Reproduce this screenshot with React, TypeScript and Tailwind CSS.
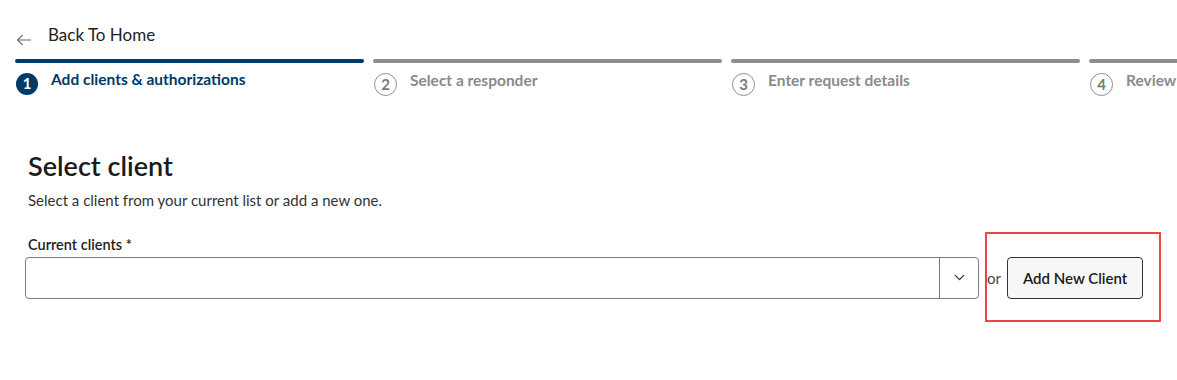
import { ChevronDown } from 'lucide-react';

type Step = { n: number; label: string; active?: boolean };

const steps: Step[] = [
  { n: 1, label: 'Add clients & authorizations', active: true },
  { n: 2, label: 'Select a responder' },
  { n: 3, label: 'Enter request details' },
  { n: 4, label: 'Review' },
];

function BackArrow() {
  return (
    <svg width="16" height="12" viewBox="0 0 16 12" fill="none" className="text-[#6b6b6b]">
      <path d="M15 6H1.5M6.5 1L1.5 6l5 5" stroke="currentColor" strokeWidth="1.1" />
    </svg>
  );
}

function StepItem({ step }: { step: Step }) {
  return (
    <div className="w-[349px] shrink-0">
      <div className={`h-[4px] rounded-full ${step.active ? 'bg-[#003a66]' : 'bg-[#8e8e8e]'}`} />
      <div className="flex items-center gap-[13px] mt-[10px] pl-[1px]">
        {step.active ? (
          <span className="w-[22px] h-[22px] rounded-full bg-[#003a66] text-white text-[15px] font-bold flex items-center justify-center leading-none">
            {step.n}
          </span>
        ) : (
          <span className="w-[23px] h-[23px] rounded-full border border-[#8e8e8e] text-[#7a7a7a] text-[15px] font-bold flex items-center justify-center leading-none">
            {step.n}
          </span>
        )}
        <span
          className={`text-[15.5px] font-bold -mt-[7px] whitespace-nowrap ${step.active ? 'text-[#003a66]' : 'text-[#8a8a8a]'}`}
        >
          {step.label}
        </span>
      </div>
    </div>
  );
}

export default function App() {
  return (
    <div className="w-[1177px] h-[380px] overflow-hidden bg-white relative font-['Lato','Liberation_Sans',sans-serif] text-[#1f1f1f]">
      <div className="flex items-center gap-[16px] pl-[16px] pt-[22px]">
        <span className="mt-[10px]">
          <BackArrow />
        </span>
        <span className="text-[17px] text-[#222]">Back To Home</span>
      </div>

      <div className="flex gap-[9px] pl-[15px] mt-[11px]">
        {steps.map((s) => (
          <StepItem key={s.n} step={s} />
        ))}
      </div>

      <div className="pl-[28px] pt-[54px]">
        <h1 className="text-[27px] font-semibold leading-[32px] text-[#1a1a1a]">Select client</h1>
        <p className="text-[15px] text-[#333] mt-[7px]">Select a client from your current list or add a new one.</p>
      </div>

      <div className="pl-[25px] pt-[23px]">
        <label className="block text-[14.5px] font-semibold text-[#222] pl-[3px]">Current clients *</label>
        <div className="flex items-center mt-[1px]">
          <div className="w-[954px] h-[42px] border border-[#7a7a7a] rounded-[4px] flex justify-end">
            <div className="w-[39px] border-l border-[#7a7a7a] flex items-center justify-center">
              <ChevronDown size={17} strokeWidth={1.8} className="text-[#333]" />
            </div>
          </div>
          <div className="relative flex items-center">
            <span className="text-[15px] text-[#444] ml-[8px] mr-[6px]">or</span>
            <button
              type="button"
              className="h-[42px] px-[15px] border border-[#333] rounded-[4px] bg-[#f7f7f7] text-[15px] font-semibold text-[#1a1a1a]"
            >
              Add New Client
            </button>
            <div className="absolute left-[6px] -top-[25px] w-[176px] h-[90px] border-2 border-[#ee4444] pointer-events-none" />
          </div>
        </div>
      </div>
    </div>
  );
}
